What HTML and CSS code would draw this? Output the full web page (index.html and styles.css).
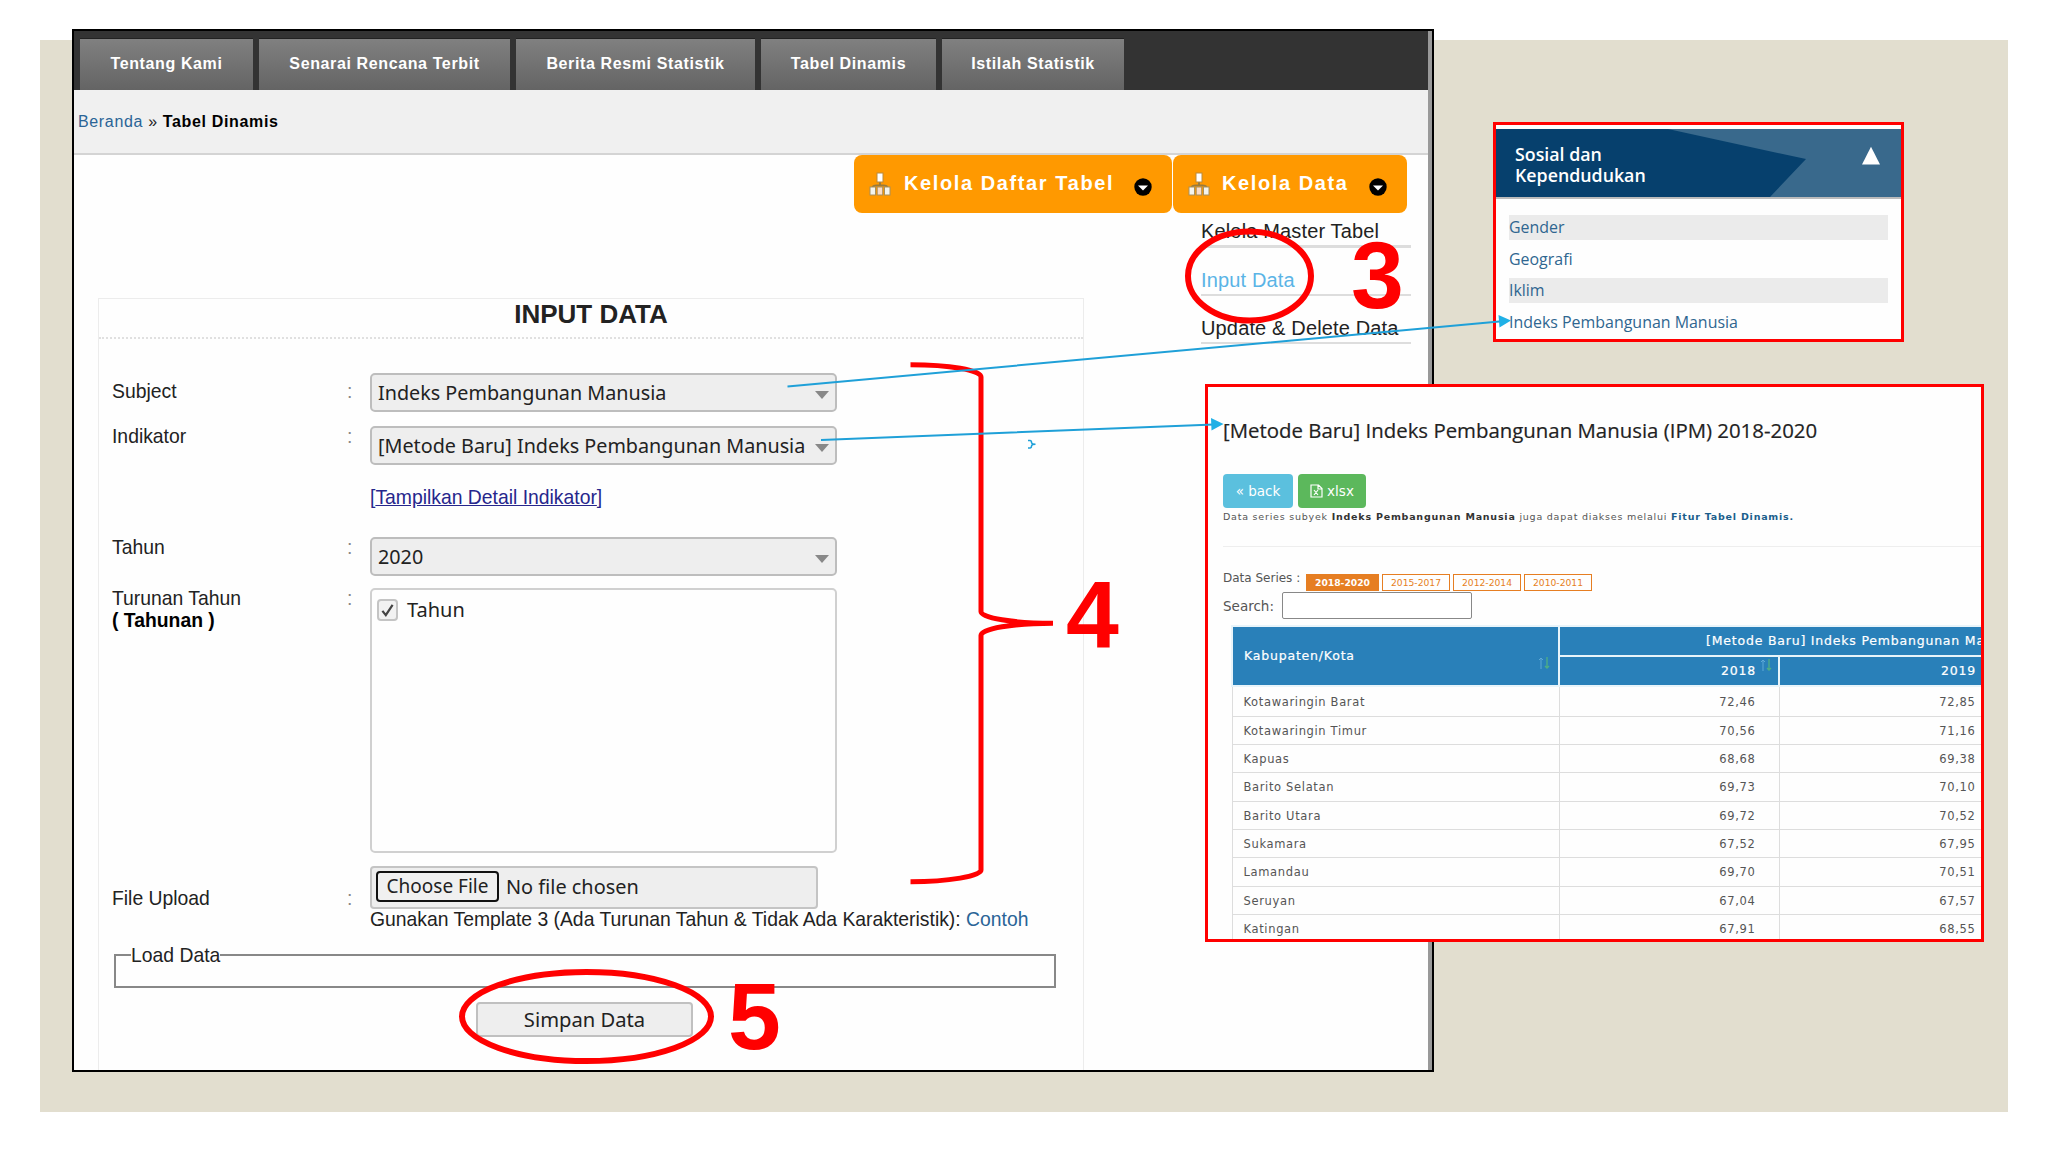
FILE: index.html
```html
<!DOCTYPE html>
<html lang="id">
<head>
    <meta charset="UTF-8">
    <meta name="viewport" content="width=device-width, initial-scale=1.0">
    <title>Tabel Dinamis - Input Data</title>
    <link rel="stylesheet" href="styles.css">
</head>
<body>
    <div class="slide">
        <div class="backdrop"></div>

        <!-- Input data -->
        <div class="window window-input">
            <nav class="main-nav">
                <a class="tab tab-1">Tentang Kami</a>
                <a class="tab tab-2">Senarai Rencana Terbit</a>
                <a class="tab tab-3">Berita Resmi Statistik</a>
                <a class="tab tab-4">Tabel Dinamis</a>
                <a class="tab tab-5">Istilah Statistik</a>
            </nav>
            <div class="breadcrumb"><a>Beranda</a> » <b>Tabel Dinamis</b></div>

            <div class="toolbar">
                <div class="menu-btn">
                    <svg class="org-icon" viewBox="0 0 22 24"><path d="M11 10v4M3.500 15.500c0-3 15-3 15 0" fill="none" stroke="#9a7a3a" stroke-width="2"/><rect x="8" y="1" width="6" height="9" fill="#fff" stroke="#b98a3c"/><rect x="1" y="15" width="5.500" height="8" fill="#f4f4ee" stroke="#a8905c"/><rect x="8.200" y="15" width="5.500" height="8" fill="#fbdcc8" stroke="#a8905c"/><rect x="15.500" y="15" width="5.500" height="8" fill="#f4f4ee" stroke="#a8905c"/></svg>
                    <span>Kelola Daftar Tabel</span>
                    <svg class="drop-icon" viewBox="0 0 18 18"><circle cx="9" cy="9" r="8.700"/><path d="M4 7.500h10l-5 5z" fill="#fff"/></svg>
                </div>
                <div class="menu-btn menu-btn-data">
                    <svg class="org-icon" viewBox="0 0 22 24"><path d="M11 10v4M3.500 15.500c0-3 15-3 15 0" fill="none" stroke="#9a7a3a" stroke-width="2"/><rect x="8" y="1" width="6" height="9" fill="#fff" stroke="#b98a3c"/><rect x="1" y="15" width="5.500" height="8" fill="#f4f4ee" stroke="#a8905c"/><rect x="8.200" y="15" width="5.500" height="8" fill="#fbdcc8" stroke="#a8905c"/><rect x="15.500" y="15" width="5.500" height="8" fill="#f4f4ee" stroke="#a8905c"/></svg>
                    <span>Kelola Data</span>
                    <svg class="drop-icon" viewBox="0 0 18 18"><circle cx="9" cy="9" r="8.700"/><path d="M4 7.500h10l-5 5z" fill="#fff"/></svg>
                </div>
            </div>

            <div class="content">
                <form class="input-form">
                    <h2>INPUT DATA</h2>
                    <div class="form-row row-subject">
                        <label for="subject">Subject</label><i>:</i>
                        <div class="select"><select id="subject"><option>Indeks Pembangunan Manusia</option></select></div>
                    </div>
                    <div class="form-row row-indikator">
                        <label for="indikator">Indikator</label><i>:</i>
                        <div>
                            <div class="select"><select id="indikator"><option>[Metode Baru] Indeks Pembangunan Manusia</option></select></div>
                            <div class="detail-link">[<a>Tampilkan Detail Indikator</a>]</div>
                        </div>
                    </div>
                    <div class="form-row row-tahun">
                        <label for="tahun">Tahun</label><i>:</i>
                        <div class="select"><select id="tahun"><option>2020</option></select></div>
                    </div>
                    <div class="form-row row-turunan">
                        <label>Turunan Tahun<br><b>( Tahunan )</b></label><i>:</i>
                        <div class="check-list">
                            <span class="checkbox"><svg viewBox="0 0 20 20"><path d="M4 11l4 5 8-12" fill="none" stroke="#444" stroke-width="2.600"/></svg></span>
                            <span>Tahun</span>
                        </div>
                    </div>
                    <div class="form-row row-file">
                        <label>File Upload</label><i>:</i>
                        <div>
                            <div class="file-box"><button type="button">Choose File</button><span>No file chosen</span></div>
                            <div class="hint">Gunakan Template 3 (Ada Turunan Tahun &amp; Tidak Ada Karakteristik): <a>Contoh</a></div>
                        </div>
                    </div>
                    <fieldset><legend>Load Data</legend></fieldset>
                    <button type="button" class="submit-btn">Simpan Data</button>
                </form>

                <ul class="submenu">
                    <li>Kelola Master Tabel</li>
                    <li class="active">Input Data</li>
                    <li>Update &amp; Delete Data</li>
                </ul>
            </div>
        </div>

        <!-- Subjek -->
        <div class="window window-subject">
            <div class="subject-head">
                <svg class="head-bg" viewBox="0 0 405 69" preserveAspectRatio="none"><path d="M172 0L310 30.500 274 69H405V0z" fill="#39698c"/><path d="M375 18l9 18h-18z" fill="#fff"/></svg>
                <h3>Sosial dan<br>Kependudukan</h3>
            </div>
            <ul>
                <li class="odd">Gender</li>
                <li>Geografi</li>
                <li class="odd">Iklim</li>
                <li>Indeks Pembangunan Manusia</li>
            </ul>
        </div>

        <!-- Tabel IPM -->
        <div class="window window-table">
            <h1>[Metode Baru] Indeks Pembangunan Manusia (IPM) 2018-2020</h1>
            <div class="buttons">
                <a class="btn btn-info">« back</a>
                <a class="btn btn-success"><svg viewBox="0 0 13 14"><path d="M1 1h7.500l3.500 3.500V13H1zM8 1v4h4M4 6l4 5M8 6l-4 5" fill="none" stroke="#fff" stroke-width="1.200"/></svg>xlsx</a>
            </div>
            <p class="note">Data series subyek <b>Indeks Pembangunan Manusia</b> juga dapat diakses melalui <b class="blue">Fitur Tabel Dinamis.</b></p>
            <hr>
            <div class="series">
                <span class="series-label">Data Series :</span>
                <a class="badge badge-active">2018-2020</a>
                <a class="badge">2015-2017</a>
                <a class="badge">2012-2014</a>
                <a class="badge">2010-2011</a>
            </div>
            <div class="search"><label for="search">Search:</label><input id="search" type="text"></div>
            <table>
                <thead>
                    <tr>
                        <th class="name" rowspan="2"><div>Kabupaten/Kota<svg class="sort" viewBox="0 0 12 14"><path d="M3 13V2M1 4l2-2 2 2" fill="none" stroke="#5fa9d6"/><path d="M9 1v11M7 10l2 2 2-2" fill="none" stroke="#4fae84" stroke-width="1.300"/></svg></div></th>
                        <th class="group" colspan="2">[Metode Baru] Indeks Pembangunan Manusia</th>
                    </tr>
                    <tr>
                        <th class="year"><div>2018<svg class="sort" viewBox="0 0 12 14"><path d="M3 13V2M1 4l2-2 2 2" fill="none" stroke="#5fa9d6"/><path d="M9 1v11M7 10l2 2 2-2" fill="none" stroke="#4fae84" stroke-width="1.300"/></svg></div></th>
                        <th class="year"><div>2019</div></th>
                    </tr>
                </thead>
                <tbody>
                    <tr><td>Kotawaringin Barat</td><td>72,46</td><td>72,85</td></tr>
                    <tr><td>Kotawaringin Timur</td><td>70,56</td><td>71,16</td></tr>
                    <tr><td>Kapuas</td><td>68,68</td><td>69,38</td></tr>
                    <tr><td>Barito Selatan</td><td>69,73</td><td>70,10</td></tr>
                    <tr><td>Barito Utara</td><td>69,72</td><td>70,52</td></tr>
                    <tr><td>Sukamara</td><td>67,52</td><td>67,95</td></tr>
                    <tr><td>Lamandau</td><td>69,70</td><td>70,51</td></tr>
                    <tr><td>Seruyan</td><td>67,04</td><td>67,57</td></tr>
                    <tr><td>Katingan</td><td>67,91</td><td>68,55</td></tr>
                </tbody>
            </table>
        </div>

        <!-- Step markers and connectors -->
        <svg class="marks" viewBox="0 0 2048 1152">
            <g fill="none" stroke="#f00">
                <ellipse cx="1249.500" cy="276" rx="61.500" ry="44.500" stroke-width="6"/>
                <ellipse cx="586.500" cy="1016.500" rx="124.500" ry="44.500" stroke-width="6"/>
                <path d="M910.500 364.700C949 364.700 981 370 981 377V611.500C981 618 1013 623.300 1053 623.300C1013 623.300 981 628.500 981 635.500V870C981 876 949 881.700 910.500 881.700" stroke-width="5"/>
            </g>
            <g stroke="#1fa0d8" stroke-width="2">
                <path d="M787.500 386.500L1502 321.200M821 440L1214 424.400"/>
                <path d="M1028 440.500h2c1.500 0 1.500.8 1.500 2s1 1.700 4 1.700c-3 0-4 .5-4 1.700s0 2-1.500 2h-2" fill="none" stroke-width="1.500"/>
            </g>
            <path d="M1498.500 315L1511 320.400 1499.500 327.500zM1211 418L1223.500 424 1211.500 430.500z" fill="#1fb0e6"/>
            <g class="step" fill="#f00">
                <text x="1351" y="308">3</text>
                <text x="1066" y="647">4</text>
                <text x="728" y="1049">5</text>
            </g>
        </svg>
    </div>
</body>
</html>
```
FILE: styles.css
```css
* {
    box-sizing: border-box;
}

body {
    margin: 0;
    background: #fff;
    font-family: "Liberation Sans", Arial, sans-serif;
    color: #222;
}

ul, h1, h2, h3, p {
    margin: 0;
    padding: 0;
    list-style: none;
}

i {
    font-style: normal;
}

.slide {
    position: relative;
    width: 2048px;
    height: 1152px;
    overflow: hidden;
}

.backdrop {
    position: absolute;
    left: 40px;
    top: 40px;
    width: 1968px;
    height: 1072px;
    background: #e2decf;
}

.window {
    position: absolute;
    background: #fefefe;
    overflow: hidden;
}

/* ---------- input window ---------- */
.window-input {
    left: 72px;
    top: 29px;
    width: 1362px;
    height: 1043px;
    border: 2px solid #000;
    box-shadow: inset -4px 0 0 #999;
    padding-right: 4px;
}

.main-nav {
    display: flex;
    gap: 6px;
    height: 59px;
    padding: 7px 0 0 6px;
    background: #333;
}

.tab {
    display: flex;
    align-items: center;
    justify-content: center;
    padding-bottom: 2px;
    border-top: 1px solid #222;
    background: linear-gradient(#808080, #646464);
    color: #fff;
    font-size: 16px;
    font-weight: bold;
    letter-spacing: 0.62px;
}

.tab-1 { width: 173px; }
.tab-2 { width: 251px; }
.tab-3 { width: 239px; }
.tab-4 { width: 175px; }
.tab-5 { width: 182px; }

.breadcrumb {
    height: 65px;
    padding: 22px 0 0 4px;
    border-bottom: 2px solid #d4d4d4;
    background: #f0f0f0;
    font-size: 16px;
    line-height: 20px;
    letter-spacing: 0.65px;
}

.breadcrumb a, .hint a {
    color: #2a6496;
}

.breadcrumb b {
    color: #000;
}

.toolbar {
    display: flex;
    justify-content: flex-end;
    gap: 1px;
    padding-right: 21px;
}

.menu-btn {
    display: flex;
    align-items: center;
    width: 318px;
    height: 58px;
    padding-left: 15px;
    border-radius: 8px;
    background: #ff9900;
    color: #fff;
    font-size: 20px;
    font-weight: bold;
    letter-spacing: 1.6px;
}

.menu-btn-data {
    width: 234px;
}

.menu-btn span {
    margin: -2px 0 0 13px;
}

.menu-btn-data span {
    margin-left: 12px;
}

.org-icon {
    width: 22px;
    height: 24px;
}

.drop-icon {
    width: 18px;
    height: 18px;
    margin: 5px 0 0 20px;
}

.content {
    display: flex;
}

.submenu {
    width: 210px;
    margin-left: 117px;
    font-size: 20px;
    line-height: 24px;
    letter-spacing: 0.15px;
    white-space: nowrap;
}

.submenu li {
    padding: 20px 0 2px;
    border-bottom: 2px solid #ddd;
}

.submenu li:first-child {
    padding-top: 6px;
    border-bottom-width: 3px;
}

.submenu .active {
    color: #5ab4e6;
}

.input-form {
    width: 986px;
    height: 800px;
    margin: 85px 0 0 24px;
    border: 1px solid #ececec;
    font-size: 19.350px;
    line-height: 22px;
}

.input-form h2 {
    height: 40px;
    margin-bottom: 34px;
    border-bottom: 2px dotted #e0e0e0;
    font-size: 26px;
    line-height: 30px;
    text-align: center;
}

.form-row {
    display: grid;
    grid-template-columns: 235px 23px 1fr;
    padding-left: 13px;
}

.form-row label, .form-row i {
    margin-top: -1px;
}

.form-row i {
    color: #888;
}

.form-row b {
    color: #000;
}

.row-subject { height: 53px; }
.row-indikator { height: 111px; }
.row-tahun { height: 51px; }
.row-turunan { height: 278px; }

.row-subject label, .row-subject i { padding-top: 8px; }
.row-file label, .row-file i { padding-top: 22px; }

.select {
    position: relative;
    width: 467px;
}

.select::after {
    content: "";
    position: absolute;
    right: 8px;
    top: 18px;
    border: 7px solid transparent;
    border-top: 8px solid #888;
    border-bottom: 0;
}

select {
    display: block;
    width: 467px;
    height: 39px;
    padding: 0 30px 0 6px;
    border: 2px solid #bdbdbd;
    border-radius: 5px;
    appearance: none;
    background: #eee;
    color: #222;
    font: 19.750px "Noto Sans", sans-serif;
    text-overflow: clip;
}

.detail-link {
    margin-top: 21px;
    color: #26268c;
}

.detail-link a {
    text-decoration: underline;
}

.check-list {
    display: flex;
    align-items: flex-start;
    gap: 9px;
    width: 467px;
    height: 265px;
    padding: 9px 0 0 5px;
    border: 2px solid #d0d0d0;
    border-radius: 5px;
    font: 20px/22px "Noto Sans", sans-serif;
}

.checkbox {
    width: 21px;
    height: 22px;
    border: 2px solid #c4c4c4;
    border-radius: 4px;
    background: #f2f2f2;
}

.checkbox svg {
    display: block;
    width: 17px;
    height: 18px;
}

.file-box {
    display: flex;
    align-items: center;
    gap: 7px;
    width: 448px;
    height: 43px;
    padding: 0 0 2px 4px;
    border: 2px solid #c4c4c4;
    border-radius: 4px;
    background: #eee;
    font: 19.900px "Noto Sans", sans-serif;
}

.file-box button {
    width: 123px;
    height: 31px;
    padding: 0;
    border: 2px solid #111;
    border-radius: 4px;
    background: #f0f0f0;
    color: #222;
    font: 19px "Noto Sans", sans-serif;
    line-height: 1;
}

.hint {
    margin-top: -1px;
    white-space: nowrap;
}

fieldset {
    width: 942px;
    height: 44px;
    margin: 14px 0 0 15px;
    padding: 0 15px;
    border: 2px solid #888;
}

legend {
    padding: 0;
}

.submit-btn {
    display: block;
    width: 217px;
    height: 35px;
    margin: 14px 0 0 377px;
    border: 2px solid #c0c0c0;
    border-radius: 4px;
    background: #eee;
    color: #222;
    font: 20.200px "Noto Sans", sans-serif;
    line-height: 1;
}

/* ---------- subject window ---------- */
.window-subject {
    left: 1493px;
    top: 122px;
    width: 411px;
    height: 220px;
    padding-top: 4px;
    border: 3px solid #f00;
    font-family: "Open Sans", sans-serif;
}

.subject-head {
    position: relative;
    height: 70px;
    padding: 15px 0 0 19px;
    border-bottom: 2px solid #bbb;
    background: #06406d;
}

.head-bg {
    position: absolute;
    left: 0;
    top: 0;
    width: 405px;
    height: 68px;
}

.subject-head h3 {
    position: relative;
    color: #fff;
    font-size: 17.800px;
    font-weight: 600;
    line-height: 20.500px;
}

.window-subject ul {
    padding: 16px 13px 0;
    color: #2f6690;
    font-size: 15.950px;
    line-height: 25px;
}

.window-subject li {
    height: 25px;
    margin-bottom: 6.500px;
}

.window-subject .odd {
    background: #ebebeb;
}

/* ---------- table window ---------- */
.window-table {
    left: 1205px;
    top: 384px;
    width: 779px;
    height: 558px;
    padding-left: 15px;
    border: 3px solid #f00;
    color: #555;
    font-family: "DejaVu Sans", sans-serif;
    white-space: nowrap;
}

.window-table h1 {
    padding-top: 28px;
    color: #222;
    font: 500 20.400px/30px "Open Sans", sans-serif;
    -webkit-text-stroke: 0.2px #222;
}

.buttons {
    display: flex;
    gap: 5px;
    margin-top: 29px;
}

.btn {
    display: flex;
    align-items: center;
    justify-content: center;
    width: 70px;
    height: 34px;
    border-radius: 4px;
    color: #fff;
    font-size: 13.500px;
}

.btn svg {
    width: 13px;
    height: 14px;
    margin-right: 4px;
}

.btn-info { background: #5bc0de; }
.btn-success { width: 68px; background: #5cb85c; }

.note {
    font-size: 9.500px;
    line-height: 17px;
    letter-spacing: 0.78px;
}

.note b {
    color: #333;
}

.note .blue {
    color: #1b5e8c;
}

hr {
    height: 1px;
    margin: 21px 0 27px;
    border: 0;
    background: #eee;
}

.series {
    display: flex;
    align-items: flex-start;
    gap: 3px;
    height: 18px;
}

.series-label {
    width: 80px;
    font-size: 12px;
    line-height: 8px;
}

.badge {
    width: 68px;
    height: 17px;
    border: 1px solid #e67e22;
    color: #e67e22;
    font-size: 9.200px;
    line-height: 16px;
    text-align: center;
}

.badge-active {
    width: 73px;
    background: #e67e22;
    color: #fff;
    font-weight: bold;
}

.search {
    display: flex;
    align-items: center;
    font-size: 13.500px;
}

.search label {
    width: 59px;
}

.search input {
    width: 190px;
    height: 27px;
    border: 1px solid #888;
    border-radius: 2px;
    background: #fff;
}

table {
    width: 769px;
    margin: 6px 0 0 8px;
    border-collapse: collapse;
    table-layout: fixed;
    font-size: 11.500px;
}

th {
    height: 30px;
    padding: 0 0 1px;
    border: 2px solid #e8f4fa;
    background: #2980b9;
    color: #fff;
    font-size: 12.500px;
    font-weight: normal;
    letter-spacing: 0.8px;
    -webkit-text-stroke: 0.2px #fff;
}

th div {
    position: relative;
}

.name {
    width: 327px;
    padding-left: 11px;
    text-align: left;
}

.group {
    padding-left: 146px;
    text-align: left;
}

.year {
    padding-right: 22px;
    text-align: right;
}

.sort {
    position: absolute;
    right: 8px;
    top: 8px;
    width: 12px;
    height: 14px;
}

.year .sort {
    right: -16px;
    top: -5px;
}

td {
    height: 28.360px;
    padding: 1px 23px 0 11px;
    border: 1px solid #ddd;
    text-align: right;
    letter-spacing: 0.65px;
}

td:first-child {
    text-align: left;
}

tbody tr:first-child td {
    height: 30px;
    padding-top: 2px;
}

/* ---------- markers ---------- */
.marks {
    position: absolute;
    left: 0;
    top: 0;
    width: 2048px;
    height: 1152px;
}

.step {
    font-size: 95px;
    font-weight: bold;
}
```
